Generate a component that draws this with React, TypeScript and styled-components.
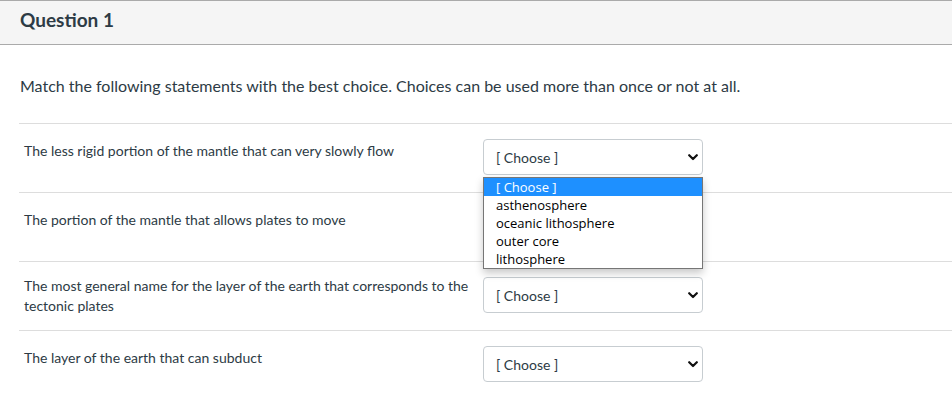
import React from "react";
import styled, { createGlobalStyle } from "styled-components";

const GlobalStyle = createGlobalStyle`
  html, body {
    margin: 0;
    padding: 0;
    background: #ffffff;
  }
  body {
    font-family: Lato, "Open Sans", Arial, sans-serif;
    color: #2d3b45;
  }
`;

const QuestionBox = styled.div`
  width: 952px;
`;

const Header = styled.div`
  box-sizing: border-box;
  height: 45px;
  padding: 8px 20px 0;
  background: #f5f5f5;
  border-top: 1px solid #aaaaaa;
  border-bottom: 1px solid #aaaaaa;
`;

const Title = styled.h2`
  margin: 0;
  font-size: 19px;
  line-height: 22px;
  font-weight: 700;
  color: #2d3b45;
`;

const Prompt = styled.p`
  margin: 31px 0 0 20px;
  font-size: 16px;
  line-height: 19px;
`;

const MatchList = styled.div`
  margin: 28px 0 0 19px;
`;

const MatchRow = styled.div`
  box-sizing: border-box;
  height: 69px;
  display: flex;
  align-items: center;
  border-top: 1px solid #dddddd;
`;

const Statement = styled.div`
  box-sizing: border-box;
  flex: 0 0 464px;
  min-height: 34px;
  padding: 0 10px 0 5px;
  font-size: 14px;
  line-height: 20px;
`;

const SelectWrap = styled.div<{ $open?: boolean }>`
  position: relative;
  flex: 0 0 220px;
  margin-top: -2px;
  z-index: ${(p) => (p.$open ? 2 : 1)};
`;

const SelectBox = styled.div`
  box-sizing: border-box;
  height: 36px;
  display: flex;
  align-items: center;
  justify-content: space-between;
  padding: 0 4px 0 12px;
  background: #ffffff;
  border: 1px solid #c7cdd1;
  border-radius: 4px;
  font-size: 14px;
  color: #2d3b45;
`;

const Chevron = styled.svg`
  display: block;
  width: 10px;
  height: 7px;
`;

const OptionList = styled.ul`
  position: absolute;
  top: calc(100% + 2px);
  left: 0;
  width: 100%;
  box-sizing: border-box;
  margin: 0;
  padding: 0;
  list-style: none;
  background: #ffffff;
  border: 1px solid #767676;
  box-shadow: 0 4px 8px rgba(0, 0, 0, 0.22);
`;

const OptionItem = styled.li<{ $selected?: boolean }>`
  height: 18px;
  line-height: 18px;
  padding-left: 12px;
  font-family: "Open Sans", "Noto Sans", Arial, sans-serif;
  font-size: 13px;
  color: ${(p) => (p.$selected ? "#ffffff" : "#000000")};
  background: ${(p) => (p.$selected ? "#1e90ff" : "transparent")};
  white-space: nowrap;
  overflow: hidden;
`;

const statements = [
  "The less rigid portion of the mantle that can very slowly flow",
  "The portion of the mantle that allows plates to move",
  "The most general name for the layer of the earth that corresponds to the tectonic plates",
  "The layer of the earth that can subduct",
];

const choices = [
  "[ Choose ]",
  "asthenosphere",
  "oceanic lithosphere",
  "outer core",
  "lithosphere",
];

function Select({ open }: { open?: boolean }) {
  return (
    <SelectWrap $open={open}>
      <SelectBox>
        <span>[ Choose ]</span>
        <Chevron viewBox="0 0 10 7" aria-hidden="true">
          <polyline
            points="1.2,1.2 5,5 8.8,1.2"
            fill="none"
            stroke="#111111"
            strokeWidth="2.2"
            strokeLinecap="round"
            strokeLinejoin="round"
          />
        </Chevron>
      </SelectBox>
      {open && (
        <OptionList>
          {choices.map((c, i) => (
            <OptionItem key={c} $selected={i === 0}>
              {c}
            </OptionItem>
          ))}
        </OptionList>
      )}
    </SelectWrap>
  );
}

export default function App() {
  return (
    <>
      <GlobalStyle />
      <QuestionBox>
        <Header>
          <Title>Question 1</Title>
        </Header>
        <Prompt>
          Match the following statements with the best choice. Choices can be
          used more than once or not at all.
        </Prompt>
        <MatchList>
          {statements.map((s, i) => (
            <MatchRow key={s}>
              <Statement>{s}</Statement>
              <Select open={i === 0} />
            </MatchRow>
          ))}
        </MatchList>
      </QuestionBox>
    </>
  );
}
